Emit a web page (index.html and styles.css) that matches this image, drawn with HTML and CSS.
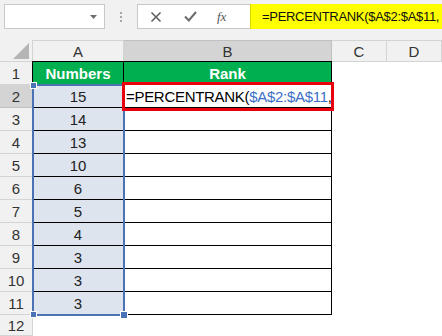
FILE: index.html
```html
<!DOCTYPE html>
<html lang="en">
<head>
  <meta charset="UTF-8">
  <title>PERCENTRANK</title>
  <link rel="stylesheet" href="styles.css">
</head>
<body>
  <!-- formula bar -->
  <div class="toolbar">
    <div class="name-box">
      <svg class="drop" width="7" height="4" viewBox="0 0 7 4"><path d="M0 0H7L3.5 4Z" fill="#707070"/></svg>
    </div>
    <div class="dots"><span></span><span></span><span></span></div>
    <div class="fx-box">
      <svg width="12" height="12" viewBox="0 0 12 12"><path d="M1.5 1.5L10.5 10.5M10.5 1.5L1.5 10.5" stroke="#606060" stroke-width="1.6"/></svg>
      <svg width="13" height="11" viewBox="0 0 13 11"><path d="M1 5.5L4.8 9.5L12 1" stroke="#6b6b6b" stroke-width="2" fill="none"/></svg>
      <span class="fx">fx</span>
    </div>
    <div class="formula">=PERCENTRANK($A$2:$A$11,</div>
  </div>

  <!-- sheet -->
  <div class="sheet">
    <div class="corner">
      <svg width="16" height="16" viewBox="0 0 16 16"><path d="M16 0V16H0Z" fill="#b5b5b5"/></svg>
    </div>
    <div class="col-head">A</div>
    <div class="col-head active">B</div>
    <div class="col-head">C</div>
    <div class="col-head">D</div>

    <div class="row-head">1</div>
    <div class="cell title first">Numbers</div>
    <div class="cell title">Rank</div>
    <div class="blank"></div><div class="blank"></div>

    <div class="row-head active">2</div>
    <div class="cell num first">15</div>
    <div class="cell edit">=PERCENTRANK(<span class="ref">$A$2:$A$11</span>,</div>
    <div class="blank"></div><div class="blank"></div>

    <div class="row-head">3</div>
    <div class="cell num first">14</div><div class="cell"></div>
    <div class="blank"></div><div class="blank"></div>

    <div class="row-head">4</div>
    <div class="cell num first">13</div><div class="cell"></div>
    <div class="blank"></div><div class="blank"></div>

    <div class="row-head">5</div>
    <div class="cell num first">10</div><div class="cell"></div>
    <div class="blank"></div><div class="blank"></div>

    <div class="row-head">6</div>
    <div class="cell num first">6</div><div class="cell"></div>
    <div class="blank"></div><div class="blank"></div>

    <div class="row-head">7</div>
    <div class="cell num first">5</div><div class="cell"></div>
    <div class="blank"></div><div class="blank"></div>

    <div class="row-head">8</div>
    <div class="cell num first">4</div><div class="cell"></div>
    <div class="blank"></div><div class="blank"></div>

    <div class="row-head">9</div>
    <div class="cell num first">3</div><div class="cell"></div>
    <div class="blank"></div><div class="blank"></div>

    <div class="row-head">10</div>
    <div class="cell num first">3</div><div class="cell"></div>
    <div class="blank"></div><div class="blank"></div>

    <div class="row-head">11</div>
    <div class="cell num first">3</div><div class="cell"></div>
    <div class="blank"></div><div class="blank"></div>

    <div class="row-head">12</div>
    <div class="blank"></div><div class="blank"></div>
    <div class="blank"></div><div class="blank"></div>

    <!-- range highlight and annotation -->
    <div class="range">
      <span class="handle tl"></span>
      <span class="handle bl"></span>
      <span class="handle br"></span>
    </div>
    <div class="mark"></div>
  </div>
</body>
</html>
```

FILE: styles.css
```css
body {
  margin: 0;
  width: 442px;
  height: 336px;
  overflow: hidden;
  background: #fff;
  font-family: "Liberation Sans", Arial, sans-serif;
}

.toolbar {
  display: flex;
  align-items: center;
  height: 40px;
  padding: 4px 0 11px 4px;
  box-sizing: border-box;
  background: #f1f1f1;
}

.name-box {
  width: 101px;
  height: 25px;
  box-sizing: border-box;
  background: #fff;
  border: 1px solid #c8c8c8;
  display: flex;
  align-items: center;
  justify-content: flex-end;
  padding-right: 7px;
}

.dots {
  width: 32px;
  display: flex;
  flex-direction: column;
  align-items: center;
  gap: 2px;
}

.dots span {
  width: 2px;
  height: 2px;
  background: #a8a8a8;
}

.fx-box {
  width: 113px;
  height: 25px;
  box-sizing: border-box;
  background: #fff;
  border: 1px solid #c8c8c8;
  border-right: none;
  display: flex;
  align-items: center;
  padding-left: 12px;
  gap: 22px;
}

.fx {
  font-family: "Liberation Serif", "Times New Roman", serif;
  font-style: italic;
  font-size: 13px;
  color: #555;
  margin-left: -2px;
}

.formula {
  flex: 1;
  height: 25px;
  box-sizing: border-box;
  background: #ffff00;
  border-left: 1px solid #d8d800;
  padding-left: 11px;
  font-size: 13px;
  letter-spacing: -0.3px;
  line-height: 25px;
  color: #111;
  white-space: nowrap;
}

.sheet {
  position: relative;
  display: grid;
  grid-template-columns: 33px 91px 208px 55px 1fr;
  grid-template-rows: 22px repeat(11, 23px) 21px;
}

.corner {
  background: #f1f1f1;
  border-right: 1px solid #d4d4d4;
  border-bottom: 1px solid #d4d4d4;
  display: flex;
  align-items: flex-end;
  justify-content: flex-end;
  padding: 0 3px 2px 0;
}

.col-head {
  background: #f1f1f1;
  border-top: 1px solid #d4d4d4;
  border-right: 1px solid #d4d4d4;
  border-bottom: 1px solid #d4d4d4;
  display: flex;
  align-items: center;
  justify-content: center;
  font-size: 15px;
  color: #333;
}

.row-head {
  background: #f1f1f1;
  border-right: 1px solid #d4d4d4;
  border-bottom: 1px solid #d4d4d4;
  display: flex;
  align-items: center;
  justify-content: center;
  font-size: 15px;
  color: #333;
}

.col-head.active,
.row-head.active {
  background: #d4d4d4;
  border-color: #c0c0c0;
}

.cell {
  border-right: 1px solid #000;
  border-bottom: 1px solid #000;
  display: flex;
  align-items: center;
  font-size: 15px;
  color: #222;
  white-space: nowrap;
}

.cell.first {
  border-left: 1px solid #000;
  margin-left: -1px;
}

.title {
  background: #00b050;
  color: #fff;
  font-weight: bold;
  justify-content: center;
  border-top: 1px solid #000;
  margin-top: -1px;
}

.num {
  background: #dde4ee;
  justify-content: center;
}

.edit {
  padding-left: 2px;
  letter-spacing: -0.3px;
  color: #000;
}

.ref {
  color: #3a6fc4;
}

.range {
  position: absolute;
  left: 32px;
  top: 44px;
  width: 93px;
  height: 232px;
  box-sizing: border-box;
  border: 2px solid #4a73b5;
}

.handle {
  position: absolute;
  width: 5px;
  height: 5px;
  background: #4a73b5;
  border: 1px solid #fff;
}

.handle.tl { left: -4px; top: -4px; }
.handle.bl { left: -4px; bottom: -4px; }
.handle.br { right: -5px; bottom: -5px; width: 6px; height: 6px; }

.mark {
  position: absolute;
  left: 122px;
  top: 42px;
  width: 212px;
  height: 29px;
  box-sizing: border-box;
  border: 3px solid #e8000c;
}
```
